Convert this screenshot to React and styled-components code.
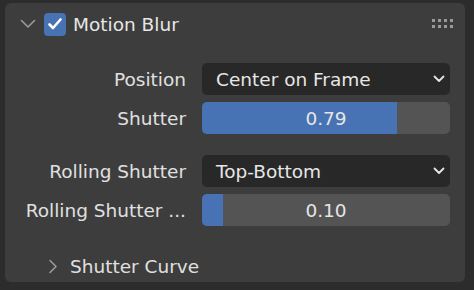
import React from "react";
import styled, { createGlobalStyle } from "styled-components";

const Global = createGlobalStyle`
  html, body { margin: 0; padding: 0; background: #2c2c2c; }
  body { font-family: "DejaVu Sans", "Liberation Sans", sans-serif; }
`;

const Panel = styled.div`
  margin: 3px 9px 0 5px;
  height: 279px;
  box-sizing: border-box;
  background: #3d3d3d;
  border-radius: 6px;
  display: flex;
  flex-direction: column;
`;

const Header = styled.div`
  height: 42px;
  display: flex;
  align-items: center;
  padding-left: 15px;
  padding-right: 10px;
  color: #e6e6e6;
  font-size: 18.5px;
`;

const Chevron = styled.svg`
  display: block;
  flex: none;
`;

const Check = styled.div`
  width: 22px;
  height: 23px;
  border-radius: 4px;
  background: #4772b3;
  margin-left: 8px;
  margin-right: 7px;
  display: flex;
  align-items: center;
  justify-content: center;
`;

const Title = styled.span`
  flex: 1;
`;

const Grip = styled.svg`
  display: block;
  margin-right: 0px;
`;

const Body = styled.div`
  display: flex;
  flex-direction: column;
  padding-right: 15px;
`;

const Group = styled.div`
  display: flex;
  flex-direction: column;
  gap: 7px;
  margin-top: ${(p) => p.$top}px;
`;

const Row = styled.div`
  display: flex;
  align-items: center;
  gap: 16px;
  height: 32px;
`;

const Label = styled.div`
  width: 181px;
  text-align: right;
  color: #e0e0e0;
  font-size: 18.5px;
  white-space: nowrap;
`;

const Dropdown = styled.div`
  flex: 1;
  height: 32px;
  box-sizing: border-box;
  background: #282828;
  border-radius: 5px;
  display: flex;
  align-items: center;
  padding: 0 4px 0 14px;
  color: #e6e6e6;
  font-size: 18.5px;
`;

const DropText = styled.span`
  flex: 1;
`;

const Slider = styled.div`
  flex: 1;
  height: 32px;
  position: relative;
  background: #545454;
  border-radius: 5px;
  overflow: hidden;
  display: flex;
  align-items: center;
  justify-content: center;
  color: #e6e6e6;
  font-size: 18.5px;
`;

const Fill = styled.div`
  position: absolute;
  left: 0;
  top: 0;
  bottom: 0;
  background: #4772b3;
`;

const Value = styled.span`
  position: relative;
`;

const SubHeader = styled.div`
  display: flex;
  align-items: center;
  height: 30px;
  margin-top: 25px;
  padding-left: 43px;
  gap: 12px;
  color: #e0e0e0;
  font-size: 18.5px;
`;

const DownArrow = () => (
  <Chevron width="14" height="10" viewBox="0 0 14 10">
    <path d="M2.5 2.5 L7 7 L11.5 2.5" fill="none" stroke="#e6e6e6" strokeWidth="1.8" strokeLinecap="round" strokeLinejoin="round" />
  </Chevron>
);

const SliderField = ({ value, fill }) => (
  <Slider>
    <Fill style={{ width: `${fill * 100}%` }} />
    <Value>{value.toFixed(2)}</Value>
  </Slider>
);

export default function App() {
  return (
    <>
      <Global />
      <Panel>
        <Header>
          <Chevron width="16" height="10" viewBox="0 0 16 10">
            <path d="M1.5 1.5 L8 8 L14.5 1.5" fill="none" stroke="#9a9a9a" strokeWidth="1.6" strokeLinecap="round" strokeLinejoin="round" />
          </Chevron>
          <Check>
            <svg width="16" height="14" viewBox="0 0 16 14">
              <path d="M2.5 7.5 L6 11 L13.5 2.5" fill="none" stroke="#ffffff" strokeWidth="2.6" strokeLinecap="round" strokeLinejoin="round" />
            </svg>
          </Check>
          <Title>Motion Blur</Title>
          <Grip width="24" height="12" viewBox="0 0 24 12">
            {[0, 1].map((r) =>
              [0, 1, 2, 3].map((c) => (
                <rect key={`${r}-${c}`} x={1 + c * 6} y={1 + r * 6} width="3" height="3" fill="#9a9a9a" />
              ))
            )}
          </Grip>
        </Header>
        <Body>
          <Group $top={18}>
            <Row>
              <Label>Position</Label>
              <Dropdown>
                <DropText>Center on Frame</DropText>
                <DownArrow />
              </Dropdown>
            </Row>
            <Row>
              <Label>Shutter</Label>
              <SliderField value={0.79} fill={0.786} />
            </Row>
          </Group>
          <Group $top={21}>
            <Row>
              <Label>Rolling Shutter</Label>
              <Dropdown>
                <DropText>Top-Bottom</DropText>
                <DownArrow />
              </Dropdown>
            </Row>
            <Row>
              <Label>Rolling Shutter ...</Label>
              <SliderField value={0.1} fill={0.085} />
            </Row>
          </Group>
        </Body>
        <SubHeader>
          <Chevron width="10" height="15" viewBox="0 0 10 15">
            <path d="M2 1.5 L8 7.5 L2 13.5" fill="none" stroke="#9a9a9a" strokeWidth="1.6" strokeLinecap="round" strokeLinejoin="round" />
          </Chevron>
          <span>Shutter Curve</span>
        </SubHeader>
      </Panel>
    </>
  );
}
